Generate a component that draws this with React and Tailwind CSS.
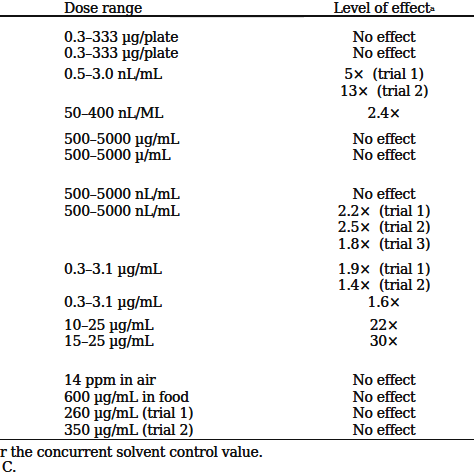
const groups = [
  { mt: "mt-[11px]", rows: [["0.3–333 µg/plate", "No effect"], ["0.3–333 µg/plate", "No effect"]] },
  { mt: "mt-[4.5px]", rows: [["0.5–3.0 nL/mL", "5×  (trial 1)"], ["", "13×  (trial 2)"]] },
  { mt: "mt-[5.5px]", rows: [["50–400 nL/ML", "2.4×"]] },
  { mt: "mt-[9.5px]", rows: [["500–5000 µg/mL", "No effect"], ["500–5000 µ/mL", "No effect"]] },
  {
    mt: "mt-[22.5px]",
    rows: [
      ["500–5000 nL/mL", "No effect"],
      ["500–5000 nL/mL", "2.2×  (trial 1)"],
      ["", "2.5×  (trial 2)"],
      ["", "1.8×  (trial 3)"],
    ],
  },
  { mt: "mt-[8.5px]", rows: [["0.3–3.1 µg/mL", "1.9×  (trial 1)"], ["", "1.4×  (trial 2)"]] },
  { mt: "mt-0", rows: [["0.3–3.1 µg/mL", "1.6×"]] },
  { mt: "mt-[6.5px]", rows: [["10–25 µg/mL", "22×"], ["15–25 µg/mL", "30×"]] },
  {
    mt: "mt-[22.5px]",
    rows: [
      ["14 ppm in air", "No effect"],
      ["600 µg/mL in food", "No effect"],
      ["260 µg/mL (trial 1)", "No effect"],
      ["350 µg/mL (trial 2)", "No effect"],
    ],
  },
];

function Row({ left, right }) {
  return (
    <div className="grid grid-cols-[294px_180px] h-[16.5px] leading-[16.5px]">
      <div className="pl-[64px] whitespace-nowrap">{left}</div>
      <div className="text-center whitespace-pre">{right}</div>
    </div>
  );
}

export default function App() {
  return (
    <div
      className="w-[474px] h-[474px] overflow-hidden bg-white text-[#111] text-[14px] tracking-[-0.3px] [text-shadow:0_0_0.5px_#000]"
      style={{ fontFamily: '"DejaVu Serif", serif' }}
    >
      <div className="grid grid-cols-[294px_180px] h-[15px] leading-[16px]">
        <div className="pl-[64px]">Dose range</div>
        <div className="text-center">
          Level of effect<sup className="text-[8px] relative -top-[2px]">a</sup>
        </div>
      </div>
      <div className="h-[1.5px] bg-[#111]" />
      <div className="h-[1px] bg-[#ddd] mx-[170px]" />

      {groups.map((g, i) => (
        <div key={i} className={g.mt}>
          {g.rows.map((r, j) => (
            <Row key={j} left={r[0]} right={r[1]} />
          ))}
        </div>
      ))}

      <div className="mt-[0.5px] h-[1.5px] bg-[#111]" />
      <div className="mt-[5px] leading-[15px] whitespace-nowrap">r the concurrent solvent control value.</div>
      <div className="leading-[14px] pl-[2px]">C.</div>
    </div>
  );
}
